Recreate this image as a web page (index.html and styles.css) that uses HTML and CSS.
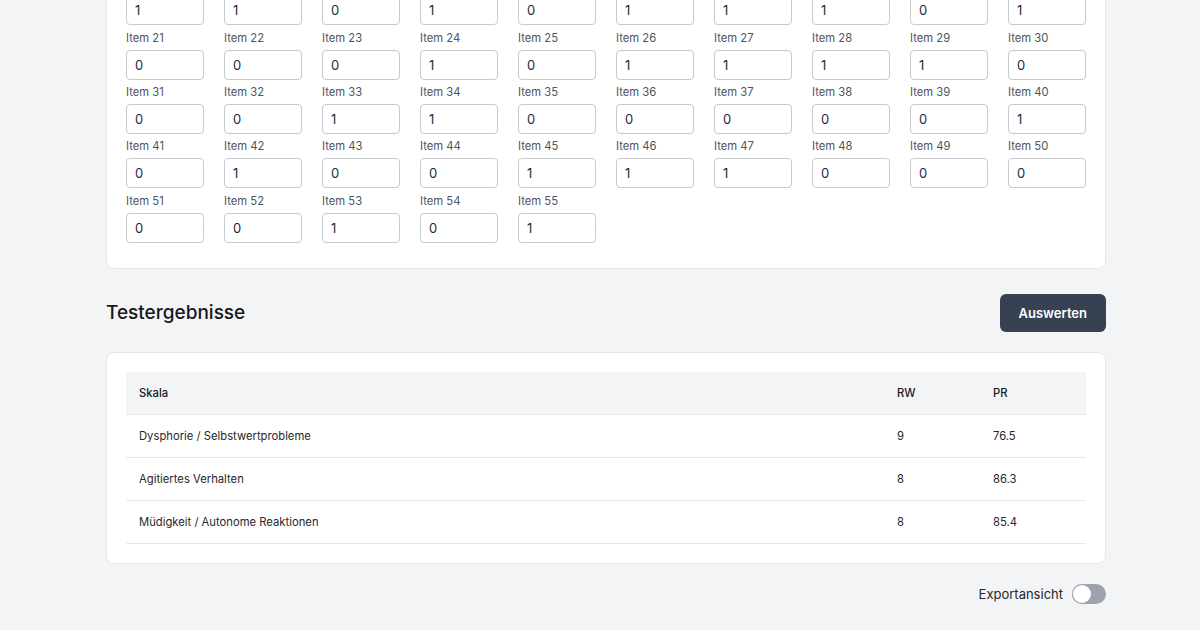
FILE: index.html
```html
<!DOCTYPE html>
<html lang="de">
<head>
    <meta charset="UTF-8">
    <meta name="viewport" content="width=device-width, initial-scale=1.0">
    <title>Testauswertung</title>
    <link rel="stylesheet" href="styles.css">
</head>
<body>
    <div class="page">
        <div class="card items-card">
            <div class="items-grid">
                <div class="field"><label>Item 1</label><input type="text" value="0"></div>
                <div class="field"><label>Item 2</label><input type="text" value="1"></div>
                <div class="field"><label>Item 3</label><input type="text" value="0"></div>
                <div class="field"><label>Item 4</label><input type="text" value="0"></div>
                <div class="field"><label>Item 5</label><input type="text" value="1"></div>
                <div class="field"><label>Item 6</label><input type="text" value="0"></div>
                <div class="field"><label>Item 7</label><input type="text" value="1"></div>
                <div class="field"><label>Item 8</label><input type="text" value="0"></div>
                <div class="field"><label>Item 9</label><input type="text" value="1"></div>
                <div class="field"><label>Item 10</label><input type="text" value="0"></div>

                <div class="field"><label>Item 11</label><input type="text" value="1"></div>
                <div class="field"><label>Item 12</label><input type="text" value="1"></div>
                <div class="field"><label>Item 13</label><input type="text" value="0"></div>
                <div class="field"><label>Item 14</label><input type="text" value="1"></div>
                <div class="field"><label>Item 15</label><input type="text" value="0"></div>
                <div class="field"><label>Item 16</label><input type="text" value="1"></div>
                <div class="field"><label>Item 17</label><input type="text" value="1"></div>
                <div class="field"><label>Item 18</label><input type="text" value="1"></div>
                <div class="field"><label>Item 19</label><input type="text" value="0"></div>
                <div class="field"><label>Item 20</label><input type="text" value="1"></div>

                <div class="field"><label>Item 21</label><input type="text" value="0"></div>
                <div class="field"><label>Item 22</label><input type="text" value="0"></div>
                <div class="field"><label>Item 23</label><input type="text" value="0"></div>
                <div class="field"><label>Item 24</label><input type="text" value="1"></div>
                <div class="field"><label>Item 25</label><input type="text" value="0"></div>
                <div class="field"><label>Item 26</label><input type="text" value="1"></div>
                <div class="field"><label>Item 27</label><input type="text" value="1"></div>
                <div class="field"><label>Item 28</label><input type="text" value="1"></div>
                <div class="field"><label>Item 29</label><input type="text" value="1"></div>
                <div class="field"><label>Item 30</label><input type="text" value="0"></div>

                <div class="field"><label>Item 31</label><input type="text" value="0"></div>
                <div class="field"><label>Item 32</label><input type="text" value="0"></div>
                <div class="field"><label>Item 33</label><input type="text" value="1"></div>
                <div class="field"><label>Item 34</label><input type="text" value="1"></div>
                <div class="field"><label>Item 35</label><input type="text" value="0"></div>
                <div class="field"><label>Item 36</label><input type="text" value="0"></div>
                <div class="field"><label>Item 37</label><input type="text" value="0"></div>
                <div class="field"><label>Item 38</label><input type="text" value="0"></div>
                <div class="field"><label>Item 39</label><input type="text" value="0"></div>
                <div class="field"><label>Item 40</label><input type="text" value="1"></div>

                <div class="field"><label>Item 41</label><input type="text" value="0"></div>
                <div class="field"><label>Item 42</label><input type="text" value="1"></div>
                <div class="field"><label>Item 43</label><input type="text" value="0"></div>
                <div class="field"><label>Item 44</label><input type="text" value="0"></div>
                <div class="field"><label>Item 45</label><input type="text" value="1"></div>
                <div class="field"><label>Item 46</label><input type="text" value="1"></div>
                <div class="field"><label>Item 47</label><input type="text" value="1"></div>
                <div class="field"><label>Item 48</label><input type="text" value="0"></div>
                <div class="field"><label>Item 49</label><input type="text" value="0"></div>
                <div class="field"><label>Item 50</label><input type="text" value="0"></div>

                <div class="field"><label>Item 51</label><input type="text" value="0"></div>
                <div class="field"><label>Item 52</label><input type="text" value="0"></div>
                <div class="field"><label>Item 53</label><input type="text" value="1"></div>
                <div class="field"><label>Item 54</label><input type="text" value="0"></div>
                <div class="field"><label>Item 55</label><input type="text" value="1"></div>
            </div>
        </div>

        <div class="results-header">
            <h2>Testergebnisse</h2>
            <button type="button" class="btn-primary">Auswerten</button>
        </div>

        <div class="card results-card">
            <table class="results-table">
                <thead>
                    <tr>
                        <th class="col-scale">Skala</th>
                        <th class="col-rw">RW</th>
                        <th class="col-pr">PR</th>
                    </tr>
                </thead>
                <tbody>
                    <tr>
                        <td>Dysphorie / Selbstwertprobleme</td>
                        <td>9</td>
                        <td>76.5</td>
                    </tr>
                    <tr>
                        <td>Agitiertes Verhalten</td>
                        <td>8</td>
                        <td>86.3</td>
                    </tr>
                    <tr>
                        <td>Müdigkeit / Autonome Reaktionen</td>
                        <td>8</td>
                        <td>85.4</td>
                    </tr>
                </tbody>
            </table>
        </div>

        <div class="export-row">
            <span>Exportansicht</span>
            <span class="toggle"><span class="knob"></span></span>
        </div>
    </div>
</body>
</html>
```

FILE: styles.css
```css
body {
    font-family: Inter, "Noto Sans", sans-serif;
    background-color: #f3f4f6;
    margin: 0;
    color: #1f2937;
}

/* page is shown scrolled down, the first rows sit above the fold */
.page {
    width: 1000px;
    margin: -98px 0 0 106px;
}

.card {
    background-color: #fff;
    border: 1px solid #e5e7eb;
    border-radius: 8px;
}

.items-card {
    padding: 19px 19px 20px;
}

.items-grid {
    display: grid;
    grid-template-columns: repeat(10, 78px);
    column-gap: 20px;
}

.field {
    margin-bottom: 5.33px;
}

.field label {
    display: block;
    font-size: 11.25px;
    line-height: 15px;
    color: #4b5563;
    margin-bottom: 4px;
}

.field input {
    box-sizing: border-box;
    width: 78px;
    height: 30px;
    padding: 0 8px;
    border: 1px solid #c6c9ce;
    border-radius: 4px;
    font-family: Inter, "Noto Sans", sans-serif;
    font-size: 13px;
    color: #1f2937;
    background-color: #fff;
}

.results-header {
    display: flex;
    justify-content: space-between;
    align-items: center;
    margin: 25px 0 20px;
}

.results-header h2 {
    margin: 0;
    font-size: 19px;
    font-weight: 500;
    color: #18181b;
}

.btn-primary {
    height: 38px;
    padding: 0 19px;
    background-color: #374151;
    color: #fff;
    border: none;
    border-radius: 6px;
    font-family: Inter, "Noto Sans", sans-serif;
    font-size: 13px;
    font-weight: 600;
    cursor: pointer;
}

.results-card {
    padding: 19px;
}

.results-table {
    width: 100%;
    border-collapse: collapse;
    font-size: 11.25px;
}

.results-table th,
.results-table td {
    text-align: left;
    padding: 0 13px;
    border-bottom: 1px solid #e5e7eb;
}

.results-table th {
    height: 42px;
    background-color: #f3f4f6;
    font-weight: 500;
    color: #18181b;
}

.results-table td {
    height: 42px;
    color: #27272a;
}

.col-rw {
    width: 70px;
}

.col-pr {
    width: 80px;
}

.export-row {
    display: flex;
    justify-content: flex-end;
    align-items: center;
    gap: 9px;
    margin-top: 20px;
    font-size: 13px;
    color: #27272a;
}

.toggle {
    display: flex;
    align-items: center;
    width: 34px;
    height: 20px;
    border-radius: 10px;
    background-color: #9ca3af;
    box-sizing: border-box;
    padding: 1px;
}

.knob {
    width: 18px;
    height: 18px;
    border-radius: 50%;
    background-color: #fff;
    box-shadow: 0 0 0 1px #9ca3af;
}
```
